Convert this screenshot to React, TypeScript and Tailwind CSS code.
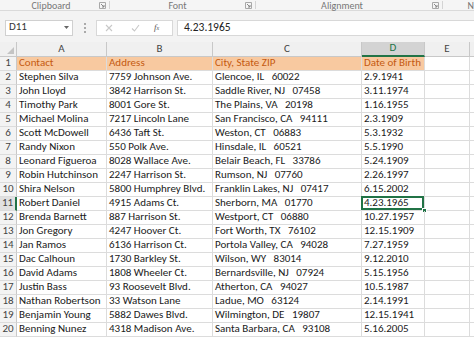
import React from "react";

const rows: [string, string, string, string][] = [
  ["Contact", "Address", "City, State ZIP", "Date of Birth"],
  ["Stephen Silva", "7759 Johnson Ave.", "Glencoe, IL   60022", "2.9.1941"],
  ["John Lloyd", "3842 Harrison St.", "Saddle River, NJ   07458", "3.11.1974"],
  ["Timothy Park", "8001 Gore St.", "The Plains, VA   20198", "1.16.1955"],
  ["Michael Molina", "7217 Lincoln Lane", "San Francisco, CA   94111", "2.3.1909"],
  ["Scott McDowell", "6436 Taft St.", "Weston, CT   06883", "5.3.1932"],
  ["Randy Nixon", "550 Polk Ave.", "Hinsdale, IL   60521", "5.5.1990"],
  ["Leonard Figueroa", "8028 Wallace Ave.", "Belair Beach, FL   33786", "5.24.1909"],
  ["Robin Hutchinson", "2247 Harrison St.", "Rumson, NJ   07760", "2.26.1997"],
  ["Shira Nelson", "5800 Humphrey Blvd.", "Franklin Lakes, NJ   07417", "6.15.2002"],
  ["Robert Daniel", "4915 Adams Ct.", "Sherborn, MA   01770", "4.23.1965"],
  ["Brenda Barnett", "887 Harrison St.", "Westport, CT   06880", "10.27.1957"],
  ["Jon Gregory", "4247 Hoover Ct.", "Fort Worth, TX   76102", "12.15.1909"],
  ["Jan Ramos", "6136 Harrison Ct.", "Portola Valley, CA   94028", "7.27.1959"],
  ["Dac Calhoun", "1730 Barkley St.", "Wilson, WY   83014", "9.12.2010"],
  ["David Adams", "1808 Wheeler Ct.", "Bernardsville, NJ   07924", "5.15.1956"],
  ["Justin Bass", "93 Roosevelt Blvd.", "Atherton, CA   94027", "10.5.1987"],
  ["Nathan Robertson", "33 Watson Lane", "Ladue, MO   63124", "2.14.1991"],
  ["Benjamin Young", "5882 Dawes Blvd.", "Wilmington, DE   19807", "12.15.1941"],
  ["Benning Nunez", "4318 Madison Ave.", "Santa Barbara, CA   93108", "5.16.2005"],
];

const font = { fontFamily: "Carlito, Lato, 'Liberation Sans', sans-serif" };

function Launcher() {
  return (
    <svg width="7" height="7" viewBox="0 0 7 7" className="shrink-0">
      <path d="M0.5 0.5 H6.5 V6.5 H0.5 Z" fill="none" stroke="#a8a8a8" strokeWidth="1" />
      <path d="M2 2 L5 5 M5 3 V5 H3" fill="none" stroke="#888" strokeWidth="1" />
    </svg>
  );
}

export default function App() {
  return (
    <div className="w-[474px] h-[338px] overflow-hidden bg-[#f3f3f3] flex flex-col" style={font}>
      {/* Ribbon group labels */}
      <div className="h-[11px] flex items-center text-[10px] leading-[11px] text-[#777] border-b border-[#dadada] bg-[#f5f5f5]">
        <div className="w-[110px] flex items-center">
          <span className="w-[100px] text-center pl-[3px]">Clipboard</span>
          <Launcher />
          <span className="ml-[3px] w-px h-[8px] bg-[#d4d4d4]" />
        </div>
        <div className="w-[146px] flex items-center">
          <span className="w-[138px] text-center">Font</span>
          <Launcher />
          <span className="ml-[3px] w-px h-[8px] bg-[#d4d4d4]" />
        </div>
        <div className="w-[210px] flex items-center">
          <span className="w-[172px] text-center">Alignment</span>
          <span className="ml-[4px]"><Launcher /></span>
          <span className="ml-[3px] w-px h-[8px] bg-[#d4d4d4]" />
        </div>
        <span className="ml-[4px]">N</span>
      </div>

      {/* Formula bar */}
      <div className="h-[31px] flex items-center pl-[5px] pt-[2px]">
        <div className="w-[68px] h-[16px] bg-white border border-[#d0d0d0] flex items-center justify-between px-[3px] text-[11px] text-[#333]">
          <span>D11</span>
          <svg width="5" height="3" viewBox="0 0 5 3"><path d="M0 0 H5 L2.5 3 Z" fill="#666" /></svg>
        </div>
        <div className="w-[23px] flex flex-col items-center justify-center gap-[2px]">
          <span className="w-[2px] h-[2px] bg-[#aaa]" />
          <span className="w-[2px] h-[2px] bg-[#aaa]" />
          <span className="w-[2px] h-[2px] bg-[#aaa]" />
        </div>
        <div className="w-[77px] h-[16px] bg-white border border-[#d8d8d8] flex items-center">
          <svg width="8" height="8" viewBox="0 0 8 8" className="ml-[8px]">
            <path d="M1 1 L7 7 M7 1 L1 7" stroke="#c8c8c8" strokeWidth="1.1" />
          </svg>
          <svg width="9" height="8" viewBox="0 0 9 8" className="ml-[18px]">
            <path d="M1 4.5 L3.5 7 L8 1" fill="none" stroke="#c8c8c8" strokeWidth="1.1" />
          </svg>
          <span className="ml-[14px] text-[9px] italic text-[#555]" style={{ fontFamily: "'Liberation Serif', serif" }}>
            f<span className="text-[6px]">x</span>
          </span>
        </div>
        <div className="ml-[4px] flex-1 h-[16px] bg-white border-y border-l border-[#d8d8d8] flex items-center pl-[6px] text-[11.5px] text-[#222]">
          4.23.1965
        </div>
      </div>

      {/* Sheet */}
      <div className="flex-1 bg-white">
        <div className="grid grid-cols-[17px_90px_106px_149px_63px_45px_1fr] grid-rows-[15px] auto-rows-[14px] text-[11px] text-[#1a1a1a]">
          {/* Column headers */}
          <div className="bg-[#f0f0f0] border-r border-b border-[#c8c8c8] relative">
            <svg width="7" height="7" viewBox="0 0 7 7" className="absolute right-[2px] bottom-[2px]">
              <path d="M7 0 V7 H0 Z" fill="#c4c4c4" />
            </svg>
          </div>
          {["A", "B", "C"].map((c) => (
            <div key={c} className="bg-[#f0f0f0] border-r border-b border-[#c8c8c8] flex items-center justify-center text-[11px] text-[#444]">
              {c}
            </div>
          ))}
          <div className="bg-[#d3d3d3] border-r border-[#c8c8c8] border-b-2 border-b-[#217346] flex items-center justify-center text-[11px] text-[#217346]">
            D
          </div>
          <div className="bg-[#f0f0f0] border-r border-b border-[#c8c8c8] flex items-center justify-center text-[11px] text-[#444]">
            E
          </div>
          <div className="bg-[#f0f0f0] border-b border-[#c8c8c8]" />

          {rows.map((r, i) => {
            const n = i + 1;
            const header = i === 0;
            const sel = n === 11;
            const cellBase = "border-r border-b border-[#dcdcdc] flex items-center pl-[2px] whitespace-pre overflow-hidden";
            const hdr = header ? "bg-[#f8c9a0] text-[#c55a11]" : "";
            return (
              <React.Fragment key={n}>
                <div
                  className={`border-b border-[#dcdcdc] flex items-center justify-center text-[11px] text-[#444] ${
                    sel ? "border-r-2 border-r-[#217346] bg-[#e1e1e1]" : "bg-[#f3f3f3] border-r border-r-[#c8c8c8]"
                  }`}
                >
                  {n}
                </div>
                <div className={`${cellBase} ${hdr}`}>{r[0]}</div>
                <div className={`${cellBase} ${hdr}`}>{r[1]}</div>
                <div className={`${cellBase} ${hdr}`}>{r[2]}</div>
                <div className={`${cellBase} ${hdr} relative overflow-visible`}>
                  {sel && (
                    <>
                      <div className="absolute -left-px -top-px right-0 bottom-0 border-2 border-[#217346]" />
                      <div className="absolute -right-[3px] -bottom-[3px] w-[5px] h-[5px] bg-[#217346] border border-white" />
                    </>
                  )}
                  {r[3]}
                </div>
                <div className={`${cellBase}`} />
                <div className="border-b border-[#dcdcdc]" />
              </React.Fragment>
            );
          })}
        </div>
      </div>
    </div>
  );
}
